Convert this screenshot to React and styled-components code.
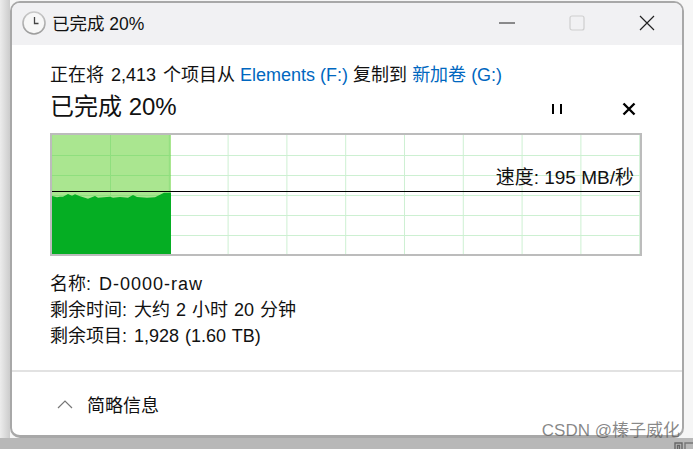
import styled, { createGlobalStyle } from "styled-components";

const Global = createGlobalStyle`
  html, body { margin: 0; padding: 0; }
  body {
    width: 693px;
    height: 449px;
    overflow: hidden;
    background: #b8b8b8;
    font-family: "Liberation Sans", "Noto Sans CJK SC", sans-serif;
    color: #111;
  }
`;

const Desktop = styled.div`
  position: relative;
  width: 693px;
  height: 449px;
  box-sizing: border-box;
  padding: 1px 9px 11px 10px;
  background-color: #b8b8b8;
  background-image:
    linear-gradient(180deg, transparent 438px, #b8b8b8 438px),
    linear-gradient(90deg, #ececec, #cccccc 10px, #f6f6f6 10px);
`;

const Win = styled.div`
  height: 100%;
  box-sizing: border-box;
  border-style: solid;
  border-color: #a8a8a8;
  border-width: 2px 2px 3px 2px;
  border-radius: 10px;
  background: #fff;
  overflow: hidden;
  display: flex;
  flex-direction: column;
`;

const TitleBar = styled.div`
  height: 42px;
  box-sizing: border-box;
  flex: none;
  background: #f1f1f3;
  display: flex;
  align-items: center;
  padding: 0 3px 3px 10px;
  font-size: 17.5px;
`;

const TitleText = styled.span`
  margin-left: 6px;
  flex: 1;
`;

const WinBtns = styled.div`
  display: flex;
  align-items: center;
  gap: 5px;
`;

const WinBtn = styled.div`
  width: 65px;
  display: flex;
  justify-content: center;
  align-items: center;
`;

const Main = styled.div`
  flex: 1;
  padding: 19px 40px 0 38px;
`;

const Summary = styled.div`
  font-size: 18px;
  line-height: 22px;
  white-space: nowrap;
`;

const Count = styled.span`
  margin: 0 2px;
`;

const Place = styled.span`
  color: #0067c0;
`;

const Heading = styled.div`
  display: flex;
  align-items: center;
  font-size: 24px;
  line-height: 30px;
  margin-top: 6px;
  height: 30px;
`;

const HeadingText = styled.span`
  flex: 1;
`;

const Controls = styled.div`
  display: flex;
  gap: 59px;
  align-items: center;
  padding: 4px 6px 0 0;
`;

const Graph = styled.div`
  position: relative;
  height: 123px;
  box-sizing: border-box;
  margin-top: 11px;
  border: 2px solid #bcbcbc;
  background-color: #fff;
  background-image:
    linear-gradient(90deg, #cdf0d2 1px, transparent 1px),
    repeating-linear-gradient(180deg, transparent 0 19px, #cdf0d2 19px 20px);
  background-size: 58.8px 100%, 100% 120px;
  background-position: 58px 0, 0 1px;
  background-repeat: repeat, no-repeat;
  overflow: hidden;
`;

const Fill = styled.div`
  position: absolute;
  left: 0;
  top: 0;
  bottom: 0;
  width: 119px;
  background-color: #aae690;
  background-image:
    linear-gradient(90deg, #8fdf7e 1px, transparent 1px),
    repeating-linear-gradient(180deg, transparent 0 19px, #8fdf7e 19px 20px);
  background-size: 58.8px 100%, 100% 120px;
  background-position: 58px 0, 0 1px;
  background-repeat: repeat, no-repeat;
`;

const Wave = styled.svg`
  position: absolute;
  left: 0;
  top: 0;
  display: block;
`;

const SpeedLine = styled.div`
  position: absolute;
  left: 0;
  right: 0;
  top: 56px;
  height: 1px;
  background: #000;
`;

const Speed = styled.div`
  position: absolute;
  right: 6px;
  top: 32px;
  font-size: 19px;
  line-height: 22px;
  white-space: nowrap;
`;

const Details = styled.div`
  margin-top: 15px;
  font-size: 18px;
  line-height: 26px;
  word-spacing: 1px;
`;

const Row = styled.div`
  display: flex;
  gap: 7px;
`;

const FileName = styled.span`
  margin-left: 1px;
  letter-spacing: 1px;
`;

const Footer = styled.div`
  flex: none;
  height: 65px;
  box-sizing: border-box;
  border-top: 2px solid #e2e2e2;
  display: flex;
  align-items: center;
  padding-left: 45px;
  gap: 14px;
  font-size: 18px;
`;

const Watermark = styled.div`
  position: absolute;
  right: 13px;
  bottom: 8px;
  font-size: 17px;
  line-height: 20px;
  color: rgba(90, 90, 90, 0.72);
  white-space: nowrap;
`;

const CornerMark = styled.svg`
  position: absolute;
  right: 0;
  bottom: 0;
  display: block;
`;

const wave = "M0 61 L5 62.3 L8 61.7 L11 61.7 L16 59 L20 60.7 L23 59.3 L28 61.3 L36 63.7 L43 61 L46 62.7 L58 61.7 L61 62.7 L68 62 L76 62.7 L81 60 L85 62 L95 62.7 L103 62.3 L108 59.7 L112 57.7 L119 57.7 L119 123 L0 123 Z";

const Clock = () => (
  <svg width="24" height="24" viewBox="0 0 24 24">
    <defs>
      <linearGradient id="rim" x1="0" y1="0" x2="0" y2="1">
        <stop offset="0" stopColor="#c9c9c9" />
        <stop offset="1" stopColor="#9c9c9c" />
      </linearGradient>
    </defs>
    <circle cx="12" cy="12" r="11" fill="#f7f7f7" stroke="url(#rim)" strokeWidth="1.6" />
    <path d="M12.5 6v6.5h4" fill="none" stroke="#444" strokeWidth="1.3" />
  </svg>
);

export default function App() {
  return (
    <Desktop>
      <Global />
      <Win>
        <TitleBar>
          <Clock />
          <TitleText>已完成 20%</TitleText>
          <WinBtns>
            <WinBtn>
              <svg width="16" height="2" viewBox="0 0 16 2"><path d="M0 1h16" stroke="#222" /></svg>
            </WinBtn>
            <WinBtn>
              <svg width="16" height="16" viewBox="0 0 16 16"><rect x="1" y="1" width="14" height="14" rx="2" fill="none" stroke="#cfcfcf" strokeWidth="1.2" /></svg>
            </WinBtn>
            <WinBtn>
              <svg width="16" height="16" viewBox="0 0 16 16"><path d="M1 1l14 14M15 1L1 15" stroke="#222" strokeWidth="1.2" /></svg>
            </WinBtn>
          </WinBtns>
        </TitleBar>
        <Main>
          <Summary>
            正在将 <Count>2,413</Count> 个项目从 <Place>Elements (F:)</Place> 复制到 <Place>新加卷 (G:)</Place>
          </Summary>
          <Heading>
            <HeadingText>已完成 20%</HeadingText>
            <Controls>
              <svg width="12" height="12" viewBox="0 0 12 12"><path d="M2 1v10M10 1v10" stroke="#000" strokeWidth="2" /></svg>
              <svg width="14" height="14" viewBox="0 0 14 14"><path d="M1.5 1.5l11 11M12.5 1.5l-11 11" stroke="#000" strokeWidth="2.4" /></svg>
            </Controls>
          </Heading>
          <Graph>
            <Fill />
            <Wave width="119" height="123" viewBox="0 0 119 123"><path d={wave} fill="#05ae23" /></Wave>
            <SpeedLine />
            <Speed>速度: 195 MB/秒</Speed>
          </Graph>
          <Details>
            <Row><span>名称:</span><FileName>D-0000-raw</FileName></Row>
            <Row><span>剩余时间:</span><span>大约 2 小时 20 分钟</span></Row>
            <Row><span>剩余项目:</span><span>1,928 (1.60 TB)</span></Row>
          </Details>
        </Main>
        <Footer>
          <svg width="16" height="10" viewBox="0 0 16 10"><path d="M1 9l7-7 7 7" fill="none" stroke="#777" strokeWidth="1.2" /></svg>
          <span>简略信息</span>
        </Footer>
      </Win>
      <Watermark>CSDN @榛子威化</Watermark>
      <CornerMark width="19" height="7" viewBox="0 0 19 7">
        <path d="M1 7V1h7v6M3.5 7V3.5h2V7" fill="none" stroke="#666" strokeWidth="1.4" />
        <path d="M11 7V1h8" fill="none" stroke="#777" strokeWidth="1.4" />
      </CornerMark>
    </Desktop>
  );
}
